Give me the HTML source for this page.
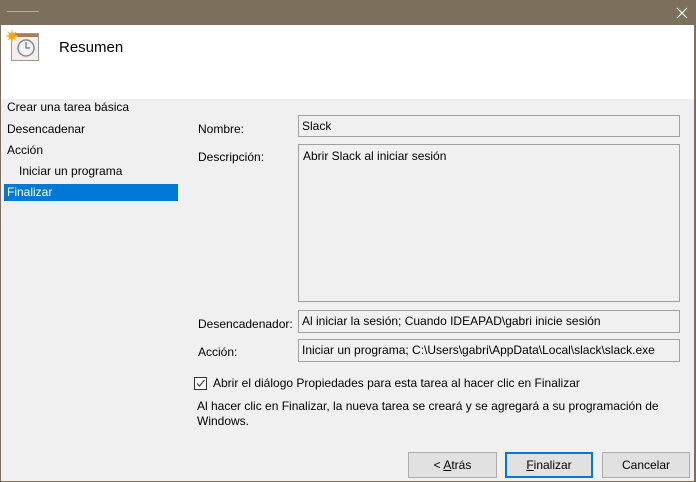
<!DOCTYPE html>
<html><head><meta charset="utf-8"><style>
*{margin:0;padding:0;box-sizing:border-box}
body{width:696px;height:482px;overflow:hidden;background:#7b705c;font-family:"Liberation Sans",sans-serif;font-size:12px;color:#000;position:relative}
.a{position:absolute;white-space:nowrap}
#hdr{position:absolute;left:1px;top:25px;width:693px;height:74px;background:#fff}
#body{position:absolute;left:1px;top:99px;width:693px;height:382px;background:#f0f0f0}
.box{position:absolute;border:1px solid #a0a0a0;background:#f0f0f0;padding:3px 0 0 3px;white-space:nowrap}
.btn{position:absolute;top:452px;height:26px;border:1px solid #adadad;background:#e1e1e1;text-align:center;line-height:24px}
</style></head><body>
<div class="a" style="left:7px;top:11px;width:32px;height:1px;background:#b8b0a2"></div>
<svg class="a" style="left:676px;top:7px" width="12" height="12"><path d="M1 1L11 11M11 1L1 11" stroke="#fff" stroke-width="1.2"/></svg>
<div id="hdr"></div>
<div id="body"></div>
<svg class="a" style="left:5px;top:29px" width="36" height="36">
<rect x="6.5" y="4.5" width="27" height="27" fill="#f2f0ea" stroke="#999"/>
<rect x="7" y="5" width="26" height="3" fill="#a87d5b"/>
<circle cx="21" cy="19" r="8" fill="#eef4fa" stroke="#8a8a8a" stroke-width="1.5"/>
<path d="M21 13v6h4" stroke="#555" fill="none"/>
<path d="M7 1v12M1 7h12M3 3l8 8M11 3l-8 8" stroke="#f7c320" stroke-width="1.2"/>
<circle cx="7" cy="7" r="3.5" fill="#f5a810"/>
</svg>
<div class="a" style="left:59px;top:39px;font-size:15px">Resumen</div>
<div class="a" style="left:7px;top:100px">Crear una tarea básica</div>
<div class="a" style="left:7px;top:122px">Desencadenar</div>
<div class="a" style="left:7px;top:143px">Acción</div>
<div class="a" style="left:19px;top:164px">Iniciar un programa</div>
<div class="a" style="left:4px;top:184px;width:174px;height:17px;background:#0078d7;color:#fff;padding:1px 0 0 3px">Finalizar</div>
<div class="a" style="left:198px;top:122px">Nombre:</div>
<div class="a" style="left:198px;top:150px">Descripción:</div>
<div class="a" style="left:198px;top:317px">Desencadenador:</div>
<div class="a" style="left:198px;top:345px">Acción:</div>
<div class="box" style="left:298px;top:115px;width:382px;height:22px">Slack</div>
<div class="box" style="left:298px;top:144px;width:382px;height:158px;padding:4px 0 0 4px">Abrir Slack al iniciar sesión</div>
<div class="box" style="left:298px;top:310px;width:382px;height:23px">Al iniciar la sesión; Cuando IDEAPAD\gabri inicie sesión</div>
<div class="box" style="left:298px;top:339px;width:382px;height:23px">Iniciar un programa; C:\Users\gabri\AppData\Local\slack\slack.exe</div>
<svg class="a" style="left:194px;top:377px" width="13" height="13"><rect x=".5" y=".5" width="12" height="12" fill="#fff" stroke="#333"/><path d="M3 6.5l2.5 2.5 5-6" stroke="#333" fill="none" stroke-width="1.1"/></svg>
<div class="a" style="left:213px;top:376px">Abrir el diálogo Propiedades para esta tarea al hacer clic en Finalizar</div>
<div class="a" style="left:197px;top:399px;line-height:15px">Al hacer clic en Finalizar, la nueva tarea se creará y se agregará a su programación de<br>Windows.</div>
<div class="btn" style="left:408px;width:89px">&lt; <u>A</u>trás</div>
<div class="btn" style="left:505px;width:88px;border:2px solid #0078d7;line-height:22px"><u>F</u>inalizar</div>
<div class="btn" style="left:602px;width:88px">Cancelar</div>
</body></html>
